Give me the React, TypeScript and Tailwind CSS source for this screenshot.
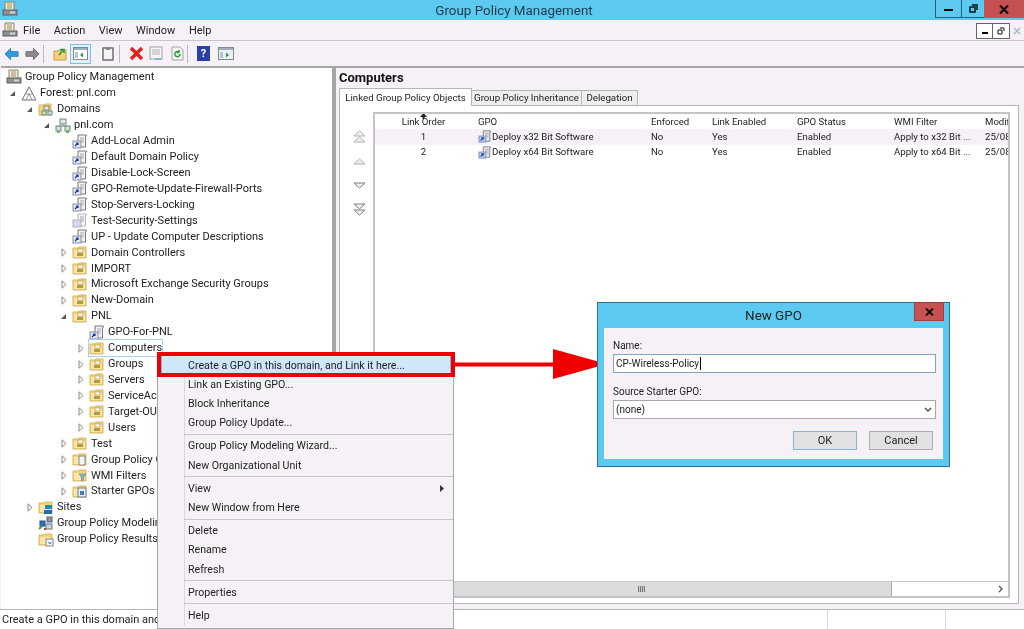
import clsx from "clsx";

const font = "font-['Roboto','Noto_Sans',sans-serif]";

type TreeRow = {
  label: string;
  level: number;
  icon: "root" | "forest" | "domains" | "domain" | "gpo" | "gpoFaded" | "folder" | "gpoFolder" | "wmi" | "starter" | "sites" | "modeling" | "results";
  tri?: "open" | "closed";
  selected?: boolean;
};

const treeRows: TreeRow[] = [
  { label: "Group Policy Management", level: 0, icon: "root" },
  { label: "Forest: pnl.com", level: 1, icon: "forest", tri: "open" },
  { label: "Domains", level: 2, icon: "domains", tri: "open" },
  { label: "pnl.com", level: 3, icon: "domain", tri: "open" },
  { label: "Add-Local Admin", level: 4, icon: "gpo" },
  { label: "Default Domain Policy", level: 4, icon: "gpo" },
  { label: "Disable-Lock-Screen", level: 4, icon: "gpo" },
  { label: "GPO-Remote-Update-Firewall-Ports", level: 4, icon: "gpo" },
  { label: "Stop-Servers-Locking", level: 4, icon: "gpo" },
  { label: "Test-Security-Settings", level: 4, icon: "gpoFaded" },
  { label: "UP - Update Computer Descriptions", level: 4, icon: "gpo" },
  { label: "Domain Controllers", level: 4, icon: "folder", tri: "closed" },
  { label: "IMPORT", level: 4, icon: "folder", tri: "closed" },
  { label: "Microsoft Exchange Security Groups", level: 4, icon: "folder", tri: "closed" },
  { label: "New-Domain", level: 4, icon: "folder", tri: "closed" },
  { label: "PNL", level: 4, icon: "folder", tri: "open" },
  { label: "GPO-For-PNL", level: 5, icon: "gpo" },
  { label: "Computers", level: 5, icon: "folder", tri: "closed", selected: true },
  { label: "Groups", level: 5, icon: "folder", tri: "closed" },
  { label: "Servers", level: 5, icon: "folder", tri: "closed" },
  { label: "ServiceAccounts", level: 5, icon: "folder", tri: "closed" },
  { label: "Target-OU", level: 5, icon: "folder", tri: "closed" },
  { label: "Users", level: 5, icon: "folder", tri: "closed" },
  { label: "Test", level: 4, icon: "folder", tri: "closed" },
  { label: "Group Policy Objects", level: 4, icon: "gpoFolder", tri: "closed" },
  { label: "WMI Filters", level: 4, icon: "wmi", tri: "closed" },
  { label: "Starter GPOs", level: 4, icon: "starter", tri: "closed" },
  { label: "Sites", level: 2, icon: "sites", tri: "closed" },
  { label: "Group Policy Modeling", level: 2, icon: "modeling" },
  { label: "Group Policy Results", level: 2, icon: "results" },
];

const menuGroups = [
  ["Link an Existing GPO...", "Block Inheritance", "Group Policy Update..."],
  ["Group Policy Modeling Wizard...", "New Organizational Unit"],
  ["View", "New Window from Here"],
  ["Delete", "Rename", "Refresh"],
  ["Properties"],
  ["Help"],
];

const columns = [
  { label: "GPO", w: "w-[173px]" },
  { label: "Enforced", w: "w-[61px]" },
  { label: "Link Enabled", w: "w-[85px]" },
  { label: "GPO Status", w: "w-[97px]" },
  { label: "WMI Filter", w: "w-[91px]" },
  { label: "Modified", w: "w-[30px]" },
];

const linkRows = [
  { order: "1", cells: ["Deploy x32 Bit Software", "No", "Yes", "Enabled", "Apply to x32 Bit ...", "25/08"] },
  { order: "2", cells: ["Deploy x64 Bit Software", "No", "Yes", "Enabled", "Apply to x64 Bit ...", "25/08"] },
];

function Tri({ open }: { open: boolean }) {
  return open ? (
    <svg width="7" height="7" viewBox="0 0 7 7"><path d="M6 1v5H1z" fill="#555" /></svg>
  ) : (
    <svg width="6" height="9" viewBox="0 0 6 9"><path d="M1 .8 5 4.500 1 8.200z" fill="#fff" stroke="#8a8a8a" /></svg>
  );
}

function GpoIcon({ faded, blue, size = 16 }: { faded?: boolean; blue?: boolean; size?: number }) {
  return (
    <svg width={size} height={size - 1} viewBox="0 0 16 15">
      <path d="M6 1h7l2 .5-1.500 1V13H6z" fill={blue ? "#dfe8f4" : "#f4f4f4"} stroke={faded ? "#b5b5c0" : "#777"} />
      <path d="M8 4h4M8 6h4M8 8h4" stroke="#aaa" />
      <rect x="1" y="7" width="8" height="7" fill={faded ? "#d8d8ea" : blue ? "#a9c6ec" : "#dfe4f2"} stroke={faded ? "#b0b0c8" : "#8a8fa8"} />
      {!faded && <path d="M3 12l3-3M4 9h2v2" stroke="#2233aa" strokeWidth="1.200" fill="none" />}
    </svg>
  );
}

function FolderIcon({ badge }: { badge?: "script" | "wmi" | "starter" | "sites" | "results" }) {
  return (
    <svg width="16" height="15" viewBox="0 0 16 15">
      <path d="M1 3h5l1-1h7v11H1z" fill="#f3d27a" stroke="#d9b75f" />
      <rect x="2" y="5" width="11" height="7" fill="#f9e6a8" />
      {!badge && (
        <>
          <rect x="6" y="4" width="5" height="3" fill="#fff" stroke="#a08a40" strokeWidth=".6" />
          <rect x="5" y="8" width="6" height="3" fill="#b79a3a" />
        </>
      )}
      {badge === "script" && <path d="M7 4h6v9H7z" fill="#f4f4f4" stroke="#888" />}
      {badge === "wmi" && <path d="M7 6h7l-2.500 3v3l-2 1V9z" fill="#8fb2c9" stroke="#5d7f96" strokeWidth=".7" />}
      {badge === "starter" && (
        <>
          <rect x="6" y="4" width="8" height="9" fill="#e8edf4" stroke="#6a7f9a" />
          <path d="M8 7h4v4H8z" fill="#4a78b0" />
        </>
      )}
      {badge === "sites" && (
        <>
          <rect x="7" y="5" width="7" height="4" fill="#1f86c9" />
          <rect x="6" y="10" width="8" height="4" fill="#1f6fb0" />
        </>
      )}
      {badge === "results" && (
        <>
          <rect x="8" y="7" width="7" height="7" fill="#f2f2f2" stroke="#8a8a8a" />
          <path d="M10 10l2 2 1-2" stroke="#3a7fb0" fill="none" />
        </>
      )}
    </svg>
  );
}

function ConsoleIcon() {
  return (
    <svg width="16" height="16" viewBox="0 0 16 16">
      <path d="M3 1h9v9H3z" fill="#f0ead2" stroke="#8c8468" />
      <path d="M5 3h5M5 5h5M5 7h5" stroke="#9d9570" />
      <rect x="1" y="9" width="14" height="5" fill="#8d9094" stroke="#5d6064" />
      <rect x="8" y="10.500" width="5" height="2" fill="#d4d6d8" />
    </svg>
  );
}

function ForestIcon() {
  return (
    <svg width="16" height="15" viewBox="0 0 16 15">
      <path d="M8 1 1 14h14z" fill="#fafafa" stroke="#6f6f6f" />
      <path d="M4.800 8h6.400M8 8l-3.200 6M8 8l3.200 6" stroke="#9a9a9a" fill="none" />
    </svg>
  );
}

function DomainIcon() {
  return (
    <svg width="16" height="15" viewBox="0 0 16 15">
      <rect x="5" y="1" width="6" height="5" fill="#dfe8e2" stroke="#6e8a7c" />
      <rect x="1" y="8" width="5" height="5" fill="#cfe0d4" stroke="#6e8a7c" />
      <rect x="10" y="8" width="5" height="5" fill="#cfe0d4" stroke="#6e8a7c" />
      <path d="M2 14h3M11 14h3" stroke="#46a53a" strokeWidth="1.500" />
      <path d="M8 6v2M3.500 8h9" stroke="#6e8a7c" />
    </svg>
  );
}

function DomainsIcon() {
  return (
    <svg width="16" height="15" viewBox="0 0 16 15">
      <path d="M1 3h5l1-1h6v11H1z" fill="#f3d27a" stroke="#d9b75f" />
      <rect x="6" y="4" width="5" height="4" fill="#dfe8e2" stroke="#6e8a7c" />
      <rect x="4" y="9" width="4" height="4" fill="#cfe0d4" stroke="#6e8a7c" />
      <rect x="10" y="9" width="4" height="4" fill="#cfe0d4" stroke="#6e8a7c" />
    </svg>
  );
}

function ModelingIcon() {
  return (
    <svg width="16" height="15" viewBox="0 0 16 15">
      <rect x="9" y="1" width="5" height="5" fill="#8a96a8" stroke="#566478" />
      <rect x="2" y="5" width="5" height="5" fill="#3a6fc0" stroke="#2a4f90" />
      <rect x="8" y="8" width="6" height="5" fill="#cfd5de" stroke="#6a7484" />
      <path d="M1 13l3-3" stroke="#46a53a" strokeWidth="2" />
      <path d="M6 13h2" stroke="#c04030" strokeWidth="2" />
    </svg>
  );
}

function TreeIcon({ name }: { name: TreeRow["icon"] }) {
  if (name === "root") return <ConsoleIcon />;
  if (name === "forest") return <ForestIcon />;
  if (name === "domains") return <DomainsIcon />;
  if (name === "domain") return <DomainIcon />;
  if (name === "gpo") return <GpoIcon />;
  if (name === "gpoFaded") return <GpoIcon faded />;
  if (name === "gpoFolder") return <FolderIcon badge="script" />;
  if (name === "wmi") return <FolderIcon badge="wmi" />;
  if (name === "starter") return <FolderIcon badge="starter" />;
  if (name === "sites") return <FolderIcon badge="sites" />;
  if (name === "modeling") return <ModelingIcon />;
  if (name === "results") return <FolderIcon badge="results" />;
  return <FolderIcon />;
}

function Toolbar() {
  return (
    <div className="flex h-[25px] items-center pl-[4px]">
      <svg width="15" height="14" viewBox="0 0 16 14" className="mr-[6px]"><path d="M7 1 1 7l6 6V9.500h8v-5H7z" fill="#2f9ce6" stroke="#2b7fc0" /></svg>
      <svg width="15" height="14" viewBox="0 0 16 14" className="mr-[3px]"><path d="M9 1l6 6-6 6V9.500H1v-5h8z" fill="#8b8b8b" stroke="#6f6f6f" /></svg>
      <div className="mr-[9px] h-[18px] w-px bg-[#b9b9b9]" />
      <svg width="14" height="14" viewBox="0 0 14 14" className="mr-[3px]">
        <path d="M1 4h4l1-1h7v10H1z" fill="#f3d27a" stroke="#c4a04a" />
        <path d="M6 8l4-5M7 2.500h4V6" stroke="#2f9a3a" strokeWidth="1.600" fill="none" />
      </svg>
      <div className="mr-[11px] flex h-[20px] w-[21px] items-center justify-center border border-[#7cc0ea] bg-[#e4f1fa]">
        <svg width="15" height="13" viewBox="0 0 15 13">
          <rect x=".5" y=".5" width="14" height="12" fill="#fff" stroke="#7d8a94" />
          <rect x="1" y="1" width="13" height="2" fill="#9fb0bd" />
          <rect x="2" y="5" width="3" height="6" fill="#b8c4cc" />
          <path d="M10 5.500v5L7 8z" fill="#2f9a3a" />
        </svg>
      </div>
      <svg width="12" height="15" viewBox="0 0 12 15" className="mr-[5px]">
        <rect x="1" y="2" width="10" height="12" fill="#f4f4f4" stroke="#666" strokeWidth="1.400" />
        <rect x="4" y="1" width="4" height="3" fill="#888" />
      </svg>
      <div className="mr-[9px] h-[18px] w-px bg-[#b9b9b9]" />
      <svg width="15" height="15" viewBox="0 0 15 15" className="mr-[5px]"><path d="M2 2l11 11M13 2 2 13" stroke="#e2231a" strokeWidth="3.400" /></svg>
      <svg width="14" height="15" viewBox="0 0 14 15" className="mr-[8px]">
        <rect x="1" y="1" width="12" height="12" fill="#f4f4f4" stroke="#a2a2a2" />
        <path d="M3 4h8M3 6h8M3 8h8" stroke="#b5b5b5" />
        <rect x="6" y="12" width="6" height="2" fill="#7db7dc" />
      </svg>
      <svg width="13" height="15" viewBox="0 0 13 15" className="mr-[3px]">
        <path d="M1 1h8l3 3v10H1z" fill="#f6f6f6" stroke="#a2a2a2" />
        <path d="M9 8a2.600 2.600 0 1 1-1-2M8 4v2.500H5.500" stroke="#2f9a3a" strokeWidth="1.500" fill="none" />
      </svg>
      <div className="mr-[9px] h-[18px] w-px bg-[#b9b9b9]" />
      <div className="mr-[8px] flex h-[15px] w-[13px] items-center justify-center bg-[#2a3fa8] text-[11px] leading-none font-bold text-white">?</div>
      <svg width="16" height="13" viewBox="0 0 16 13">
        <rect x=".5" y=".5" width="15" height="12" fill="#eef1f3" stroke="#7d8a94" />
        <rect x="1" y="1" width="14" height="2" fill="#9fb0bd" />
        <rect x="2" y="5" width="3" height="6" fill="#b8c4cc" />
        <path d="M8 5.500v5l3-2.500z" fill="#2f9a3a" />
      </svg>
    </div>
  );
}

function TreeLine({ row }: { row: TreeRow }) {
  return (
    <div className="flex h-[15.930px] items-center whitespace-nowrap">
      <div className="flex shrink-0 items-center justify-end pr-[5px]" style={{ width: row.level * 17 + 3 }}>
        {row.tri && <Tri open={row.tri === "open"} />}
      </div>
      <div className={clsx("flex h-[16px] items-center", row.selected && "outline outline-[#a5d2f0]")}>
        <TreeIcon name={row.icon} />
        <span className="ml-[3px]">{row.label}</span>
      </div>
    </div>
  );
}

function MoveIcon({ up, double }: { up: boolean; double?: boolean }) {
  return (
    <svg width="15" height="15" viewBox="0 0 15 15">
      {up ? (
        <>
          <path d={double ? "M2 7 7.500 2 13 7z" : "M2 11 7.500 6 13 11z"} fill="#f0f0f0" stroke="#b0b0b0" />
          {double && <path d="M2 13 7.500 8 13 13z" fill="#f0f0f0" stroke="#b0b0b0" />}
        </>
      ) : (
        <>
          <path d={double ? "M2 3h11L7.500 8z" : "M2 6h11L7.500 11z"} fill="#f0f0f0" stroke="#7e7e7e" />
          {double && <path d="M2 9h11l-5.500 5z" fill="#f0f0f0" stroke="#7e7e7e" />}
        </>
      )}
    </svg>
  );
}

function LinkedTable() {
  return (
    <div className="relative flex min-w-0 flex-1 flex-col border-2 border-[#c4c4c8] bg-white">
      <div className="flex h-[15px] shrink-0 items-center overflow-hidden text-[9.600px]">
        <div className="relative mr-[2px] w-[97px] shrink-0 bg-white text-center">
          Link Order
          <svg width="7" height="6" viewBox="0 0 7 6" className="absolute top-[-1px] left-[45px]"><path d="M3.500 0 7 4H4.500v2h-2V4H0z" fill="#222" /></svg>
        </div>
        {columns.map((c) => (
          <div key={c.label} className={clsx("shrink-0 overflow-hidden pl-[4px] whitespace-nowrap", c.w)}>{c.label}</div>
        ))}
      </div>
      {linkRows.map((r, i) => (
        <div key={r.order} className={clsx("flex h-[15.500px] shrink-0 items-center overflow-hidden text-[9.600px]", i === 0 && "bg-[#f5f1f6]")}>
          <div className="mr-[2px] w-[97px] shrink-0 text-center">{r.order}</div>
          {r.cells.map((cell, j) => (
            <div key={columns[j].label} className={clsx("flex shrink-0 items-center overflow-hidden pl-[4px] whitespace-nowrap", columns[j].w)}>
              {j === 0 && <span className="mr-[0px]"><GpoIcon blue size={14} /></span>}
              {cell}
            </div>
          ))}
        </div>
      ))}
      <div className="flex-1" />
      <div className="flex h-[15px] items-center border-t border-[#c8c8c8]">
        <div className="flex h-[14px] w-[517px] items-center justify-center border-r border-[#a8a8a8] bg-[#dcdcdc] pl-[16px]">
          <div className="h-[6px] w-[7px] bg-[repeating-linear-gradient(90deg,#777_0,#777_1px,#ccc_1px,#ccc_2px)]" />
        </div>
        <div className="flex-1" />
        <div className="flex h-[14px] w-[14px] items-center justify-center">
          <svg width="6" height="8" viewBox="0 0 6 8"><path d="M1 1l3 3-3 3" stroke="#555" strokeWidth="1.400" fill="none" /></svg>
        </div>
      </div>
    </div>
  );
}

function RightPane() {
  return (
    <div className="flex min-w-0 flex-1 flex-col border-t-2 border-l-2 border-[#a6a6a6] pl-[3px]">
      <div className="flex h-[20px] items-center text-[13px] font-bold text-[#111]">Computers</div>
      <div className="relative z-10 -mb-px flex h-[18px] items-end text-[9.700px] whitespace-nowrap">
        <div className="flex h-[18px] w-[133px] items-center justify-center border border-b-0 border-[#b5b5b5] bg-white">Linked Group Policy Objects</div>
        <div className="flex h-[16px] w-[110px] items-center justify-center border border-l-0 border-[#b5b5b5] bg-[#f0edf1]">Group Policy Inheritance</div>
        <div className="flex h-[16px] w-[56px] items-center justify-center border border-l-0 border-[#b5b5b5] bg-[#f0edf1]">Delegation</div>
      </div>
      <div className="mr-[5px] flex min-h-0 flex-1 border border-[#b5b5b5] bg-white pt-[6px] pr-[8px] pb-[5px]">
        <div className="flex w-[33px] shrink-0 flex-col items-center gap-[9px] pt-[17px] pl-[5px]">
          <MoveIcon up double />
          <MoveIcon up />
          <MoveIcon up={false} />
          <MoveIcon up={false} double />
        </div>
        <LinkedTable />
      </div>
      <div className="h-[5px]" />
    </div>
  );
}

function ContextMenu() {
  return (
    <div className="absolute top-[352px] left-[157px] h-[277px] w-[297px] border border-[#a8a8a8] bg-[#f5f1f6] pt-[2px] pl-[3px] text-[10.600px] text-[#222]">
      <div className="absolute top-0 bottom-[2px] left-[26px] w-px bg-[#dcd8dd]" />
      <div className="relative flex h-[20px] w-[290px] items-center border border-[#7db8e8] bg-[#cfe7f9] pt-[1px] pl-[26px]">Create a GPO in this domain, and Link it here...</div>
      {menuGroups.map((group, i) => (
        <div key={group[0]} className={clsx("relative ml-[23px]", i > 0 && "mt-[1px] border-t border-[#c8c6ca] pt-[1.800px]")}>
          {group.map((item) => (
            <div key={item} className="flex h-[19.300px] w-[266px] items-center pl-[4px]">
              <span className="flex-1">{item}</span>
              {item === "View" && <svg width="4" height="7" viewBox="0 0 4 7" className="mr-[6px]"><path d="M0 0l4 3.500L0 7z" fill="#333" /></svg>}
            </div>
          ))}
        </div>
      ))}
    </div>
  );
}

function Callout() {
  return (
    <>
      <div className="absolute top-[352px] left-[157px] h-[25px] w-[298px] border-[4px] border-[#ee0000]" />
      <svg width="153" height="34" viewBox="0 0 153 34" className="absolute top-[347px] left-[455px]">
        <path d="M0 15.500h98V2l54 15-54 15V19.500H0z" fill="#f00000" />
      </svg>
    </>
  );
}

function Dialog() {
  return (
    <div className="absolute top-[302px] left-[597px] flex h-[165px] w-[353px] flex-col border border-[#2f6f8d] bg-[#5bc9f0] text-[#222]">
      <div className="relative flex h-[25px] shrink-0 items-center justify-center text-[13.400px]">
        New GPO
        <div className="absolute top-[-1px] right-[5px] flex h-[19px] w-[30px] items-center justify-center border border-[#9c3f3f] bg-[#c75050]">
          <svg width="9" height="8" viewBox="0 0 9 8"><path d="M1 .5l7 7M8 .5l-7 7" stroke="#111" strokeWidth="2" /></svg>
        </div>
      </div>
      <div className="mx-[6px] mb-[7px] flex flex-1 flex-col bg-[#f5f1f6] px-[9px] pt-[10px] text-[10px]">
        <div className="h-[15px] leading-[15px]">Name:</div>
        <div className="mt-[1px] flex h-[19px] w-[323px] items-center border border-[#7fa7c0] bg-white pl-[2px]">
          CP-Wireless-Policy<span className="ml-[1px] h-[13px] w-px bg-black" />
        </div>
        <div className="mt-[11px] h-[15px] leading-[15px]">Source Starter GPO:</div>
        <div className="mt-[1px] flex h-[19px] w-[323px] items-center justify-between border border-[#a8a8a8] bg-white px-[2px]">
          (none)
          <svg width="8" height="6" viewBox="0 0 8 6" className="mr-[1px]"><path d="M1 1l3 3 3-3" stroke="#555" strokeWidth="1.500" fill="none" /></svg>
        </div>
        <div className="mt-[12px] flex justify-end gap-[12px] pr-[1px] text-[11px]">
          <div className="flex h-[19px] w-[64px] items-center justify-center border border-[#7fb7dc] bg-[#e1e1e1]">OK</div>
          <div className="flex h-[19px] w-[64px] items-center justify-center border border-[#adadad] bg-[#e1e1e1]">Cancel</div>
        </div>
      </div>
    </div>
  );
}

export default function App() {
  return (
    <div className={clsx("relative flex h-[629px] w-[1024px] flex-col overflow-hidden bg-[#f5f1f6] text-[11px] leading-[16px] text-[#222] blur-[0.35px]", font)}>
      {/* title bar */}
      <div className="relative flex h-[20px] shrink-0 items-center justify-center bg-[#5bc9f0] pt-[1px] pl-[4px] text-[13.400px] text-[#1c3c4c]">
        <span className="absolute top-[1px] left-[2px]"><ConsoleIcon /></span>
        Group Policy Management
        <div className="absolute top-0 right-0 flex h-[18px]">
          <div className="flex w-[26px] items-center justify-center border-b border-l border-[#2c5d75]">
            <div className="mt-[3px] h-[2px] w-[9px] bg-black" />
          </div>
          <div className="flex w-[23px] items-center justify-center border-b border-l border-[#2c5d75]">
            <svg width="9" height="9" viewBox="0 0 9 9"><path d="M3 1h5v5M1 3h5v5H1z" fill="none" stroke="#111" strokeWidth="1.500" /></svg>
          </div>
          <div className="flex w-[40px] items-center justify-center bg-[#c75050]">
            <svg width="10" height="9" viewBox="0 0 10 9"><path d="M1 .5l8 8M9 .5l-8 8" stroke="#111" strokeWidth="2.200" /></svg>
          </div>
        </div>
      </div>
      {/* menu bar */}
      <div className="flex h-[21px] shrink-0 items-center border-b border-[#c8c6ca]">
        <span className="mr-[5px] ml-[2px]"><ConsoleIcon /></span>
        <span className="mt-[1px] mr-[13.500px]">File</span>
        <span className="mt-[1px] mr-[13.500px]">Action</span>
        <span className="mt-[1px] mr-[13.500px]">View</span>
        <span className="mt-[1px] mr-[13.500px]">Window</span>
        <span className="mt-[1px]">Help</span>
        <div className="mt-[1px] ml-auto flex h-[17px] items-center">
          <div className="flex h-[16px] w-[17px] items-center justify-center border border-[#666] bg-white">
            <div className="mt-[5px] h-[2px] w-[6px] bg-black" />
          </div>
          <div className="flex h-[16px] w-[17px] items-center justify-center border border-l-0 border-[#666] bg-white">
            <svg width="8" height="8" viewBox="0 0 8 8"><path d="M3 1h4v3M1 3h4v4H1z" fill="none" stroke="#111" /></svg>
          </div>
          <div className="flex h-[16px] w-[14px] items-center justify-center">
            <svg width="8" height="8" viewBox="0 0 8 8"><path d="M1 1l6 6M7 1 1 7" stroke="#a9bacb" strokeWidth="1.500" /></svg>
          </div>
        </div>
      </div>
      <Toolbar />
      {/* main area */}
      <div className="flex min-h-0 flex-1">
        <div className="ml-[1px] w-[333px] shrink-0 overflow-hidden border-t-2 border-r-2 border-[#a6a6a6] bg-white pt-[1.500px]">
          {treeRows.map((row) => (
            <TreeLine key={row.label} row={row} />
          ))}
        </div>
        <RightPane />
      </div>
      {/* status bar */}
      <div className="flex h-[20px] shrink-0 border-t border-[#b5b5b5] bg-white">
        <div className="w-[828px] overflow-hidden border-r border-[#d8d8d8] pt-[2px] pl-[2px] whitespace-nowrap">Create a GPO in this domain and Link it here</div>
        <div className="w-[118px] border-r border-[#d8d8d8]" />
        <div className="flex-1" />
      </div>
      <ContextMenu />
      <Callout />
      <Dialog />
    </div>
  );
}
